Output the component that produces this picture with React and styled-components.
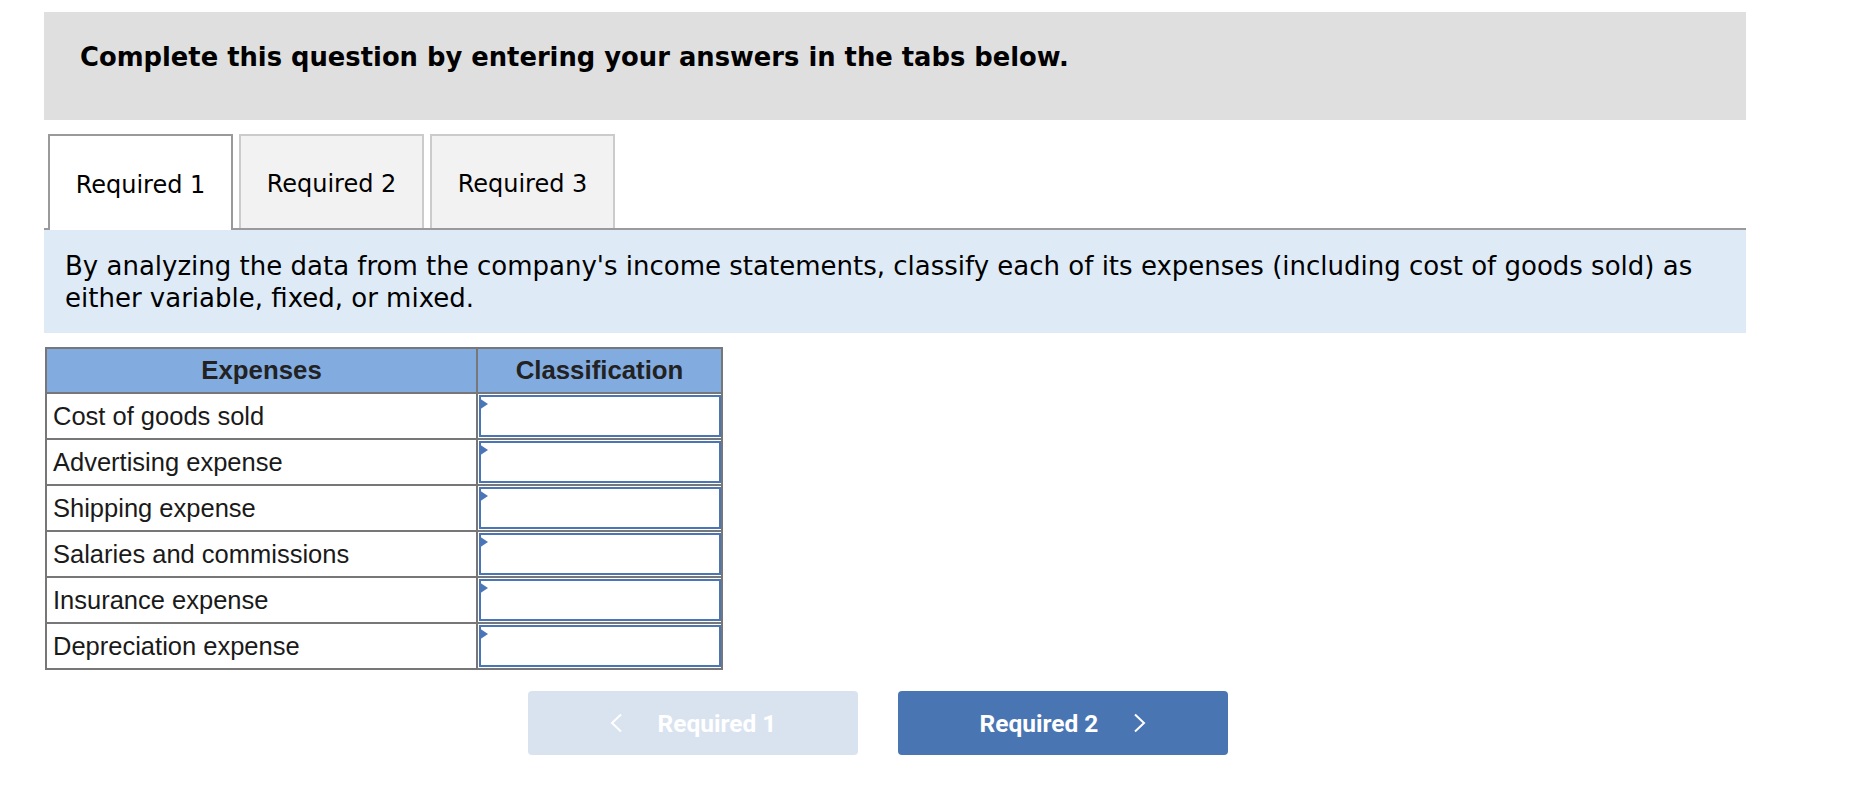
import React from 'react';
import styled, { createGlobalStyle } from 'styled-components';

const GlobalStyle = createGlobalStyle`
  body {
    margin: 8px;
    background: #fff;
    font-family: 'DejaVu Sans', Verdana, sans-serif;
    color: #000;
  }
`;

const Page = styled.div`
  width: 1702px;
  margin: 4px 0 0 36px;
`;

const Banner = styled.div`
  height: 108px;
  box-sizing: border-box;
  padding: 30px 36px 0;
  background: #dfdfdf;
  font-size: 25.8px;
  font-weight: bold;
`;

const TabBar = styled.div`
  display: flex;
  gap: 6px;
  margin-top: 14px;
  padding-left: 4px;
  border-bottom: 2px solid #9a9a9a;
`;

const Tab = styled.div`
  width: 185px;
  height: ${(p) => (p.$active ? '96px' : '94px')};
  margin-bottom: ${(p) => (p.$active ? '-2px' : '0')};
  box-sizing: border-box;
  display: flex;
  align-items: center;
  justify-content: center;
  padding-top: 4px;
  background: ${(p) => (p.$active ? '#fff' : '#f2f2f2')};
  border: 2px solid ${(p) => (p.$active ? '#9a9a9a' : '#cbcbcb')};
  border-bottom: none;
  font-size: 24px;
`;

const Prompt = styled.div`
  padding: 20px 20px 19px 21px;
  background: #deebf7;
  font-size: 26px;
  line-height: 32px;
`;

const Sheet = styled.table`
  margin: 14px 0 0 1px;
  border-collapse: collapse;
  table-layout: fixed;
  font-family: 'Liberation Sans', Arial, sans-serif;
  font-size: 25.5px;
  color: #222;
`;

const Row = styled.tr`
  height: 45px;
`;

const HeadCell = styled.th`
  padding: 0;
  border: 2px solid #777;
  background: #82abe0;
  font-size: 25.8px;
  font-weight: bold;
  text-align: center;
`;

const LabelCell = styled.td`
  padding: 0 6px;
  border: 2px solid #777;
  color: #1a1a1a;
`;

const PickCell = styled.td`
  padding: 1px 0 1px 1px;
  border: 2px solid #777;
`;

const Picker = styled.div`
  position: relative;
  height: 42px;
  box-sizing: border-box;
  border: 2px solid #4a76b8;
  background: #fff;

  &::before {
    content: '';
    position: absolute;
    left: -2px;
    top: 1px;
    border-left: 9px solid #4a76b8;
    border-top: 6.5px solid transparent;
    border-bottom: 6.5px solid transparent;
  }
`;

const Nav = styled.div`
  display: flex;
  gap: 40px;
  margin: 21px 0 0 484px;
`;

const NavButton = styled.button`
  width: 330px;
  height: 64px;
  display: flex;
  align-items: center;
  justify-content: center;
  gap: 35px;
  border: none;
  border-radius: 4px;
  background: ${(p) => (p.$disabled ? '#d9e3ef' : '#4a75b3')};
  color: #fff;
  font-family: Roboto, 'Liberation Sans', sans-serif;
  font-weight: 700;
  font-size: 24.5px;
  cursor: ${(p) => (p.$disabled ? 'default' : 'pointer')};
`;

const Chevron = ({ dir }) => (
  <svg width="13" height="20" viewBox="0 0 13 20" fill="none">
    <polyline
      points={dir === 'left' ? '11,1.5 2,10 11,18.5' : '2,1.5 11,10 2,18.5'}
      stroke="#fff"
      strokeWidth="2"
    />
  </svg>
);

const expenses = [
  'Cost of goods sold',
  'Advertising expense',
  'Shipping expense',
  'Salaries and commissions',
  'Insurance expense',
  'Depreciation expense',
];

const App = () => (
  <>
    <GlobalStyle />
    <Page>
      <Banner>Complete this question by entering your answers in the tabs below.</Banner>
      <TabBar>
        <Tab $active>Required 1</Tab>
        <Tab>Required 2</Tab>
        <Tab>Required 3</Tab>
      </TabBar>
      <Prompt>
        By analyzing the data from the company&apos;s income statements, classify each of its
        expenses (including cost of goods sold) as either variable, fixed, or mixed.
      </Prompt>
      <Sheet>
        <colgroup>
          <col style={{ width: 431 }} />
          <col style={{ width: 245 }} />
        </colgroup>
        <thead>
          <Row>
            <HeadCell>Expenses</HeadCell>
            <HeadCell>Classification</HeadCell>
          </Row>
        </thead>
        <tbody>
          {expenses.map((name) => (
            <Row key={name}>
              <LabelCell>{name}</LabelCell>
              <PickCell>
                <Picker />
              </PickCell>
            </Row>
          ))}
        </tbody>
      </Sheet>
      <Nav>
        <NavButton $disabled>
          <Chevron dir="left" />
          Required 1
        </NavButton>
        <NavButton>
          Required 2
          <Chevron dir="right" />
        </NavButton>
      </Nav>
    </Page>
  </>
);

export default App;
